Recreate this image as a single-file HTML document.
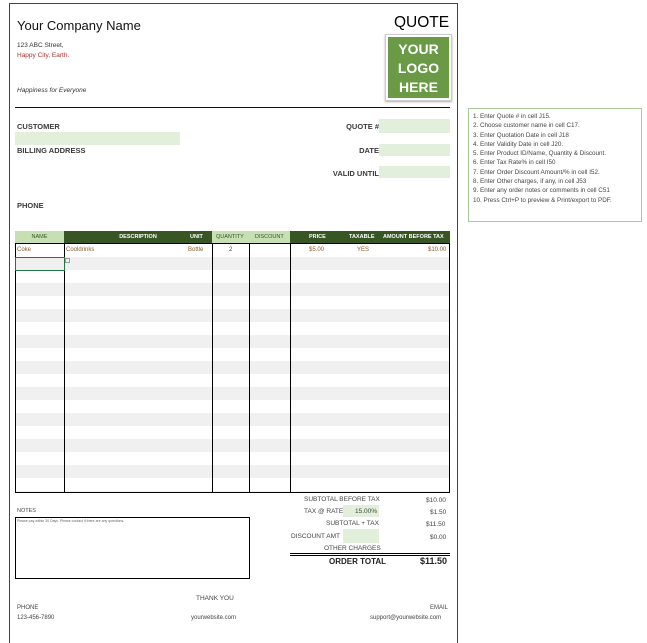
<!DOCTYPE html>
<html><head><style>
*{margin:0;padding:0;box-sizing:border-box}
body{width:647px;height:622px;background:#fff;position:relative;overflow:hidden;font-family:"Liberation Sans",sans-serif;color:#333}
.a{position:absolute;white-space:nowrap}
.lbl{font-size:7.5px;font-weight:bold;color:#3a3a3a}
.g{background:#e2efda;position:absolute}
.s{font-size:6px;color:#444}
</style></head><body>
<div class="a" style="left:9px;top:3px;width:449px;height:640px;border:1.5px solid #444;border-bottom:none"></div>
<div class="a" style="left:17px;top:18px;font-size:13px;color:#111">Your Company Name</div>
<div class="a" style="left:17px;top:41px;font-size:6.5px;color:#333;line-height:10px">123 ABC Street,<br><span style="color:#a33">Happy City, Earth.</span></div>
<div class="a" style="left:17px;top:87px;font-size:6.5px;font-style:italic;color:#333">Happiness for Everyone</div>
<div class="a" style="left:394px;top:14px;font-size:15.5px;color:#000">QUOTE</div>
<div class="a" style="left:385px;top:34px;width:67px;height:67px;border:1px solid #ccc;box-shadow:0 1px 2px #aaa;background:#fff"></div>
<div class="a" style="left:388px;top:37px;width:61px;height:61px;background:#6a9a46;color:#fff;font-weight:bold;font-size:14px;line-height:19px;text-align:center;padding-top:3px;white-space:normal">YOUR<br>LOGO<br>HERE</div>
<div class="a" style="left:15px;top:107px;width:435px;height:1px;background:#111"></div>
<div class="a lbl" style="left:17px;top:122px">CUSTOMER</div>
<div class="g" style="left:15px;top:132px;width:165px;height:13px"></div>
<div class="a lbl" style="left:17px;top:146px">BILLING ADDRESS</div>
<div class="a lbl" style="left:17px;top:201px">PHONE</div>
<div class="a lbl" style="left:379px;top:122px;transform:translateX(-100%)">QUOTE #</div>
<div class="g" style="left:379px;top:119px;width:71px;height:14px"></div>
<div class="a lbl" style="left:379px;top:146px;transform:translateX(-100%)">DATE</div>
<div class="g" style="left:379px;top:144px;width:71px;height:12px"></div>
<div class="a lbl" style="left:379px;top:169px;transform:translateX(-100%)">VALID UNTIL</div>
<div class="g" style="left:379px;top:166px;width:71px;height:12px"></div>
<div class="a" style="left:468px;top:108px;width:174px;height:114px;border:1px solid #a9c99a;font-size:6.3px;line-height:9.3px;padding:3px 0 0 4px;color:#444;white-space:normal">1. Enter Quote # in cell J15.<br>2. Choose customer name in cell C17.<br>3. Enter Quotation Date in cell J18<br>4. Enter Validity Date in cell J20.<br>5. Enter Product ID/Name, Quantity &amp; Discount.<br>6. Enter Tax Rate% in cell I50<br>7. Enter Order Discount Amount/% in cell I52.<br>8. Enter Other charges, if any, in cell J53<br>9. Enter any order notes or comments in cell C51<br>10. Press Ctrl+P to preview &amp; Print/export to PDF.</div>
<div class="a" style="left:15px;top:231px;width:49px;height:12px;background:#c6e0b4"></div>
<div class="a" style="left:64px;top:231px;width:148px;height:12px;background:#375623"></div>
<div class="a" style="left:212px;top:231px;width:78px;height:12px;background:#c6e0b4"></div>
<div class="a" style="left:290px;top:231px;width:160px;height:12px;background:#375623"></div>
<div class="a" style="top:234px;left:15px;width:49px;text-align:center;font-size:5.5px;color:#375623">NAME</div>
<div class="a" style="top:234px;left:64px;width:148px;text-align:center;font-size:5.5px;color:#fff;font-weight:bold">DESCRIPTION</div>
<div class="a" style="top:234px;left:190px;font-size:5.5px;color:#fff;font-weight:bold">UNIT</div>
<div class="a" style="top:234px;left:216px;font-size:5.5px;color:#375623">QUANTITY</div>
<div class="a" style="top:234px;left:255px;font-size:5.5px;color:#375623">DISCOUNT</div>
<div class="a" style="top:234px;left:309px;font-size:5.5px;color:#fff;font-weight:bold">PRICE</div>
<div class="a" style="top:234px;left:349px;font-size:5.5px;color:#fff;font-weight:bold">TAXABLE</div>
<div class="a" style="top:234px;left:383px;font-size:5.5px;color:#fff;font-weight:bold">AMOUNT BEFORE TAX</div>
<div class="a" style="left:15px;top:243px;width:435px;height:250px;border:1px solid #000;background:repeating-linear-gradient(#fff 0 13px,#f0f0f0 13px 26px)"></div>
<div class="a" style="left:64px;top:243px;width:1px;height:250px;background:#000"></div>
<div class="a" style="left:212px;top:243px;width:1px;height:250px;background:#000"></div>
<div class="a" style="left:249px;top:243px;width:1px;height:250px;background:#000"></div>
<div class="a" style="left:290px;top:243px;width:1px;height:250px;background:#000"></div>
<div class="a" style="left:15px;top:257px;width:50px;height:14px;border:1px solid #217346"></div>
<div class="a" style="left:65px;top:258px;width:5px;height:5px;border:1px solid #999"></div>
<div class="a s" style="left:17px;top:247px;color:#8a5a2a">Coke</div>
<div class="a s" style="left:66px;top:247px;color:#8a5a2a">Cooldrinks</div>
<div class="a s" style="left:188px;top:247px;color:#8a5a2a">Bottle</div>
<div class="a s" style="left:229px;top:247px">2</div>
<div class="a s" style="left:309px;top:247px;color:#8a5a2a">$5.00</div>
<div class="a s" style="left:357px;top:247px;color:#8a5a2a">YES</div>
<div class="a s" style="left:428px;top:247px;color:#8a5a2a">$10.00</div>
<div class="a" style="left:304px;top:496px;font-size:6.5px;color:#444">SUBTOTAL BEFORE TAX</div>
<div class="a" style="left:426px;top:497px;font-size:6.5px;color:#444">$10.00</div>
<div class="g" style="left:343px;top:505px;width:36px;height:12px"></div>
<div class="a" style="left:304px;top:508px;font-size:6.5px;color:#444">TAX @ RATE</div>
<div class="a" style="left:355px;top:508px;font-size:6.5px;color:#444">15.00%</div>
<div class="a" style="left:430px;top:509px;font-size:6.5px;color:#444">$1.50</div>
<div class="a" style="left:326px;top:520px;font-size:6.5px;color:#444">SUBTOTAL + TAX</div>
<div class="a" style="left:426px;top:521px;font-size:6.5px;color:#444">$11.50</div>
<div class="g" style="left:343px;top:529px;width:36px;height:14px"></div>
<div class="a" style="left:291px;top:533px;font-size:6.5px;color:#444">DISCOUNT AMT</div>
<div class="a" style="left:430px;top:534px;font-size:6.5px;color:#444">$0.00</div>
<div class="a" style="left:324px;top:545px;font-size:6.5px;color:#444">OTHER CHARGES</div>
<div class="a" style="left:290px;top:553px;width:160px;height:3px;border-top:1px solid #000;border-bottom:1px solid #000"></div>
<div class="a" style="left:329px;top:557px;font-size:8px;font-weight:bold;color:#222">ORDER TOTAL</div>
<div class="a" style="left:420px;top:556px;font-size:9px;font-weight:bold;color:#222">$11.50</div>
<div class="a" style="left:17px;top:508px;font-size:5.5px;color:#444">NOTES</div>
<div class="a" style="left:15px;top:517px;width:235px;height:62px;border:1px solid #000"></div>
<div class="a" style="left:17px;top:519px;font-size:3.5px;color:#666">Please pay within 30 Days. Please contact if there are any questions.</div>
<div class="a" style="left:196px;top:595px;font-size:6.5px;color:#444">THANK YOU</div>
<div class="a" style="left:17px;top:605px;font-size:6px;color:#444">PHONE</div>
<div class="a" style="left:430px;top:605px;font-size:6px;color:#444">EMAIL</div>
<div class="a" style="left:17px;top:615px;font-size:6px;color:#444">123-456-7890</div>
<div class="a" style="left:191px;top:615px;font-size:6px;color:#444">yourwebsite.com</div>
<div class="a" style="left:370px;top:615px;font-size:6px;color:#444">support@yourwebsite.com</div>
</body></html>
